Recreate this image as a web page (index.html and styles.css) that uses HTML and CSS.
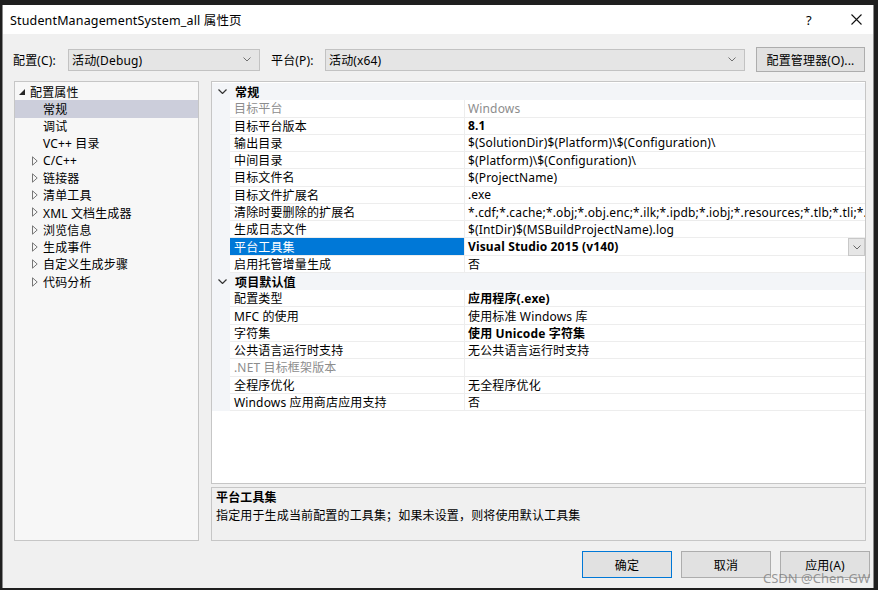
FILE: index.html
```html
<!DOCTYPE html>
<html lang="zh-CN">
<head>
    <meta charset="UTF-8" />
    <title>StudentManagementSystem_all 属性页</title>
    <link rel="stylesheet" href="styles.css">
</head>
<body>
    <div class="window">
        <div class="titlebar">
            <span class="title">StudentManagementSystem_all 属性页</span>
            <span class="help">?</span>
            <span class="close">
                <svg width="11" height="11" viewBox="0 0 11 11"><path d="M0.5 0.5 L10.5 10.5 M10.5 0.5 L0.5 10.5" stroke="#111" stroke-width="1.1" fill="none"/></svg>
            </span>
        </div>

        <div class="content">
            <div class="config-bar">
                <label class="cfg-label">配置(C):</label>
                <div class="combo combo-config">
                    <span>活动(Debug)</span>
                    <svg class="chev" width="8" height="5" viewBox="0 0 8 5"><path d="M0.5 0.5 L4 4 L7.5 0.5" stroke="#707070" fill="none"/></svg>
                </div>
                <label class="cfg-label plat-label">平台(P):</label>
                <div class="combo combo-platform">
                    <span>活动(x64)</span>
                    <svg class="chev" width="8" height="5" viewBox="0 0 8 5"><path d="M0.5 0.5 L4 4 L7.5 0.5" stroke="#707070" fill="none"/></svg>
                </div>
                <button class="btn btn-manager">配置管理器(O)...</button>
            </div>

            <div class="main">
                <!-- 左侧树 -->
                <div class="tree">
                    <div class="tree-row top">
                        <span class="arrow"><svg width="6" height="6" viewBox="0 0 6 6"><polygon points="6,0 6,6 0,6" fill="#262626"/></svg></span>
                        <span>配置属性</span>
                    </div>
                    <div class="tree-row child selected"><span class="arrow"></span><span>常规</span></div>
                    <div class="tree-row child"><span class="arrow"></span><span>调试</span></div>
                    <div class="tree-row child"><span class="arrow"></span><span>VC++ 目录</span></div>
                    <div class="tree-row child"><span class="arrow"><svg width="6" height="10" viewBox="0 0 6 10"><path d="M0.5 0.8 L5.2 5 L0.5 9.2 Z" stroke="#777" fill="none"/></svg></span><span>C/C++</span></div>
                    <div class="tree-row child"><span class="arrow"><svg width="6" height="10" viewBox="0 0 6 10"><path d="M0.5 0.8 L5.2 5 L0.5 9.2 Z" stroke="#777" fill="none"/></svg></span><span>链接器</span></div>
                    <div class="tree-row child"><span class="arrow"><svg width="6" height="10" viewBox="0 0 6 10"><path d="M0.5 0.8 L5.2 5 L0.5 9.2 Z" stroke="#777" fill="none"/></svg></span><span>清单工具</span></div>
                    <div class="tree-row child"><span class="arrow"><svg width="6" height="10" viewBox="0 0 6 10"><path d="M0.5 0.8 L5.2 5 L0.5 9.2 Z" stroke="#777" fill="none"/></svg></span><span>XML 文档生成器</span></div>
                    <div class="tree-row child"><span class="arrow"><svg width="6" height="10" viewBox="0 0 6 10"><path d="M0.5 0.8 L5.2 5 L0.5 9.2 Z" stroke="#777" fill="none"/></svg></span><span>浏览信息</span></div>
                    <div class="tree-row child"><span class="arrow"><svg width="6" height="10" viewBox="0 0 6 10"><path d="M0.5 0.8 L5.2 5 L0.5 9.2 Z" stroke="#777" fill="none"/></svg></span><span>生成事件</span></div>
                    <div class="tree-row child"><span class="arrow"><svg width="6" height="10" viewBox="0 0 6 10"><path d="M0.5 0.8 L5.2 5 L0.5 9.2 Z" stroke="#777" fill="none"/></svg></span><span>自定义生成步骤</span></div>
                    <div class="tree-row child"><span class="arrow"><svg width="6" height="10" viewBox="0 0 6 10"><path d="M0.5 0.8 L5.2 5 L0.5 9.2 Z" stroke="#777" fill="none"/></svg></span><span>代码分析</span></div>
                </div>

                <!-- 右侧属性网格 -->
                <div class="right">
                    <div class="grid">
                        <div class="cat-row">
                            <span class="gutter"><svg width="9" height="5" viewBox="0 0 9 5"><path d="M0.5 0.5 L4.5 4.5 L8.5 0.5" stroke="#333" stroke-width="1.2" fill="none"/></svg></span>
                            <span class="cat-name">常规</span>
                        </div>
                        <div class="prop dim"><span class="gutter"></span><span class="name">目标平台</span><span class="value">Windows</span></div>
                        <div class="prop"><span class="gutter"></span><span class="name">目标平台版本</span><span class="value bold">8.1</span></div>
                        <div class="prop"><span class="gutter"></span><span class="name">输出目录</span><span class="value">$(SolutionDir)$(Platform)\$(Configuration)\</span></div>
                        <div class="prop"><span class="gutter"></span><span class="name">中间目录</span><span class="value">$(Platform)\$(Configuration)\</span></div>
                        <div class="prop"><span class="gutter"></span><span class="name">目标文件名</span><span class="value">$(ProjectName)</span></div>
                        <div class="prop"><span class="gutter"></span><span class="name">目标文件扩展名</span><span class="value">.exe</span></div>
                        <div class="prop"><span class="gutter"></span><span class="name">清除时要删除的扩展名</span><span class="value">*.cdf;*.cache;*.obj;*.obj.enc;*.ilk;*.ipdb;*.iobj;*.resources;*.tlb;*.tli;*.tlh;*.tmp;*.rsp;*.pgc;*.pgd;*.meta</span></div>
                        <div class="prop"><span class="gutter"></span><span class="name">生成日志文件</span><span class="value">$(IntDir)$(MSBuildProjectName).log</span></div>
                        <div class="prop active"><span class="gutter"></span><span class="name">平台工具集</span><span class="value bold">Visual Studio 2015 (v140)</span>
                            <span class="drop"><svg width="8" height="5" viewBox="0 0 8 5"><path d="M0.5 0.5 L4 4 L7.5 0.5" stroke="#666" fill="none"/></svg></span>
                        </div>
                        <div class="prop"><span class="gutter"></span><span class="name">启用托管增量生成</span><span class="value">否</span></div>
                        <div class="cat-row">
                            <span class="gutter"><svg width="9" height="5" viewBox="0 0 9 5"><path d="M0.5 0.5 L4.5 4.5 L8.5 0.5" stroke="#333" stroke-width="1.2" fill="none"/></svg></span>
                            <span class="cat-name">项目默认值</span>
                        </div>
                        <div class="prop"><span class="gutter"></span><span class="name">配置类型</span><span class="value bold">应用程序(.exe)</span></div>
                        <div class="prop"><span class="gutter"></span><span class="name">MFC 的使用</span><span class="value">使用标准 Windows 库</span></div>
                        <div class="prop"><span class="gutter"></span><span class="name">字符集</span><span class="value bold">使用 Unicode 字符集</span></div>
                        <div class="prop"><span class="gutter"></span><span class="name">公共语言运行时支持</span><span class="value">无公共语言运行时支持</span></div>
                        <div class="prop dim"><span class="gutter"></span><span class="name">.NET 目标框架版本</span><span class="value"></span></div>
                        <div class="prop"><span class="gutter"></span><span class="name">全程序优化</span><span class="value">无全程序优化</span></div>
                        <div class="prop"><span class="gutter"></span><span class="name">Windows 应用商店应用支持</span><span class="value">否</span></div>
                    </div>
                    <div class="desc">
                        <div class="desc-title">平台工具集</div>
                        <div>指定用于生成当前配置的工具集；如果未设置，则将使用默认工具集</div>
                    </div>
                </div>
            </div>

            <div class="actions">
                <button class="btn btn-default">确定</button>
                <button class="btn">取消</button>
                <button class="btn">应用(A)</button>
            </div>
        </div>

        <div class="watermark">CSDN @Chen-GW</div>
    </div>
</body>
</html>
```

FILE: styles.css
```css
:root {
    --face: #f0f0f0;
    --border: #c6c6c6;
    --btn-face: #e1e1e1;
    --btn-border: #adadad;
    --accent: #0078d7;
    --cat-bg: #f3f5f8;
    --line: #ededed;
    --row: 17.28px;
}

body {
    margin: 0;
    width: 878px;
    height: 590px;
    overflow: hidden;
    background: #1f1f1f;
    font-family: "Segoe UI", "Noto Sans", "Noto Sans CJK SC", sans-serif;
    font-size: 12px;
    letter-spacing: 0.15px;
    color: #000;
}

.window {
    position: relative;
    margin: 5px 0 0 2px;
    width: 870px;
    height: 583px;
    border-left: 1px solid #8a8a8a;
    border-right: 1px solid #8a8a8a;
    background: var(--face);
}

/* 标题栏 */
.titlebar {
    height: 29px;
    background: #fff;
    display: flex;
    align-items: center;
    padding-left: 7px;
}

.title {
    flex: 1;
    font-size: 12.5px;
}

.help {
    width: 45px;
    font-size: 13px;
}

.close {
    width: 22px;
    display: flex;
    align-items: center;
}

.content {
    padding: 13px 3px 0 11px;
}

/* 配置 / 平台 */
.config-bar {
    display: flex;
    align-items: center;
    height: 25px;
    margin-left: -1px;
}

.cfg-label {
    width: 55px;
    flex-shrink: 0;
}

.plat-label {
    margin-left: 11px;
    width: 54px;
}

.combo {
    box-sizing: border-box;
    height: 22px;
    background: #e5e5e5;
    border: 1px solid #c2c2c2;
    display: flex;
    align-items: center;
    justify-content: space-between;
    padding: 0 8px 0 3px;
}

.combo-config {
    width: 192px;
}

.combo-platform {
    width: 420px;
}

.btn {
    box-sizing: border-box;
    font-family: inherit;
    font-size: 12px;
    letter-spacing: inherit;
    background: var(--btn-face);
    border: 1px solid var(--btn-border);
    padding: 0;
    color: #000;
}

.btn-manager {
    margin-left: 11px;
    width: 109px;
    height: 25px;
}

/* 主体 */
.main {
    display: flex;
    gap: 12px;
    margin-top: 9px;
}

.tree {
    box-sizing: border-box;
    width: 185px;
    height: 460px;
    background: #f7f7f7;
    border: 1px solid var(--border);
    padding-top: 1px;
}

.tree-row {
    height: var(--row);
    display: flex;
    align-items: center;
    white-space: nowrap;
}

.tree-row .arrow {
    width: 11px;
    display: flex;
    align-items: center;
}

.tree-row.top .arrow {
    margin-left: 4px;
}

.tree-row.child .arrow {
    margin-left: 17px;
}

.tree-row.selected {
    background: #cccedb;
}

.right {
    display: flex;
    flex-direction: column;
    gap: 3px;
}

.grid {
    box-sizing: border-box;
    width: 655px;
    height: 403px;
    background: #fff;
    border: 1px solid var(--border);
    padding-top: 1px;
    overflow: hidden;
}

.cat-row,
.prop {
    height: var(--row);
    display: flex;
    white-space: nowrap;
}

.cat-row {
    background: var(--cat-bg);
    align-items: center;
}

.gutter {
    width: 18px;
    flex-shrink: 0;
    height: 100%;
    background: var(--cat-bg);
    display: flex;
    align-items: center;
    justify-content: center;
    padding-left: 2px;
    box-sizing: border-box;
}

.cat-name {
    font-weight: bold;
    padding-left: 5px;
}

.prop .name,
.prop .value {
    box-sizing: border-box;
    height: 100%;
    display: flex;
    align-items: center;
    border-bottom: 1px solid var(--line);
    overflow: hidden;
}

.prop .name {
    width: 235px;
    flex-shrink: 0;
    padding-left: 4px;
    border-right: 1px solid var(--line);
}

.prop .value {
    flex: 1;
    padding-left: 3px;
}

.bold {
    font-weight: bold;
}

.prop.dim {
    color: #8d8d8d;
}

.prop.active .name {
    background: var(--accent);
    color: #fff;
}

.drop {
    box-sizing: border-box;
    width: 17px;
    height: 100%;
    flex-shrink: 0;
    background: #e6e6e6;
    border: 1px solid #c8c8c8;
    display: flex;
    align-items: center;
    justify-content: center;
}

.desc {
    box-sizing: border-box;
    width: 655px;
    height: 54px;
    border: 1px solid var(--border);
    padding: 1px 4px;
    line-height: 18px;
}

.desc-title {
    font-weight: bold;
}

/* 底部按钮 */
.actions {
    display: flex;
    justify-content: flex-end;
    gap: 9px;
    margin-top: 10px;
}

.actions .btn {
    width: 90px;
    height: 27px;
}

.btn-default {
    border-color: var(--accent);
}

.watermark {
    position: absolute;
    left: 760px;
    top: 564px;
    font-size: 13px;
    letter-spacing: 0;
    color: rgba(120, 120, 120, 0.75);
}
```
